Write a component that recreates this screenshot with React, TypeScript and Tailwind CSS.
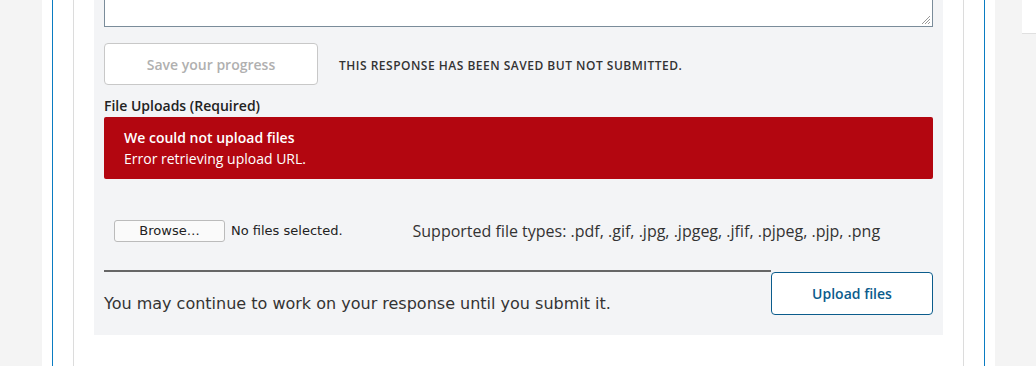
import React from "react";

export default function App() {
  return (
    <div className="flex h-[366px] w-[1036px] overflow-hidden bg-[#f4f4f4] font-['Open_Sans',sans-serif] text-[#333]">
      <div className="w-[42px] shrink-0" />
      <div className="flex w-[953px] shrink-0 bg-white pl-[10px] pr-[10px]">
        <div className="flex w-[933px] border-x border-[#0a7cc2] pl-[20px] pr-[20px]">
          <div className="w-[891px] border-x border-[#dcdcdc] px-[20px]">
            <div className="-mt-[40px] bg-[#f3f4f6] px-[10px] pb-[20px]">
              <div className="relative h-[67px] w-full border border-[#7a8c9a] bg-white">
                <svg className="absolute bottom-[1px] right-[1px]" width="10" height="10" viewBox="0 0 10 10">
                  <path d="M9 1 L1 9 M9 4 L4 9 M9 7 L7 9" stroke="#999" strokeWidth="1" />
                </svg>
              </div>
              <div className="mt-[16px] flex items-center">
                <button className="h-[42px] w-[214px] rounded-[4px] border border-[#c8c8c8] bg-white text-[14px] font-semibold text-[#b0b0b0]">
                  Save your progress
                </button>
                <span className="ml-[21px] pt-[4px] text-[12px] font-semibold uppercase tracking-[0.5px] text-[#333]">
                  This response has been saved but not submitted.
                </span>
              </div>
              <div className="mt-[10px] text-[14px] font-semibold leading-[21px] text-[#222]">
                File Uploads (Required)
              </div>
              <div className="mt-px rounded-[2px] bg-[#b30610] px-[20px] py-[10px] text-[14px] leading-[21px] text-white">
                <div className="font-semibold">We could not upload files</div>
                <div>Error retrieving upload URL.</div>
              </div>
              <div className="mt-[41px] flex items-center pl-[10px]">
                <button className="h-[22px] w-[111px] rounded-[3px] border border-[#bbb] bg-[#fafafa] font-['DejaVu_Sans',sans-serif] text-[13px] text-[#222]">
                  Browse…
                </button>
                <span className="ml-[6px] font-['DejaVu_Sans',sans-serif] text-[13px] text-[#222]">No files selected.</span>
                <span className="ml-[70px] text-[16px] leading-[22px] text-[#333]">
                  Supported file types: .pdf, .gif, .jpg, .jpgeg, .jfif, .pjpeg, .pjp, .png
                </span>
              </div>
              <div className="mt-[28px] flex">
                <div className="flex-1 border-t-2 border-[#666]">
                  <div className="pt-[21px] font-['DejaVu_Sans',sans-serif] text-[16px] leading-[22px] text-[#333]">
                    You may continue to work on your response until you submit it.
                  </div>
                </div>
                <button className="mt-[2px] h-[43px] w-[162px] rounded-[4px] border border-[#0b5c8c] bg-white text-[14px] font-semibold text-[#0b5c8c]">
                  Upload files
                </button>
              </div>
            </div>
          </div>
        </div>
      </div>
      <div className="flex flex-1 justify-end">
        <div className="h-[34px] w-[14px] border-b border-[#e0e0e0] bg-white" />
      </div>
    </div>
  );
}
